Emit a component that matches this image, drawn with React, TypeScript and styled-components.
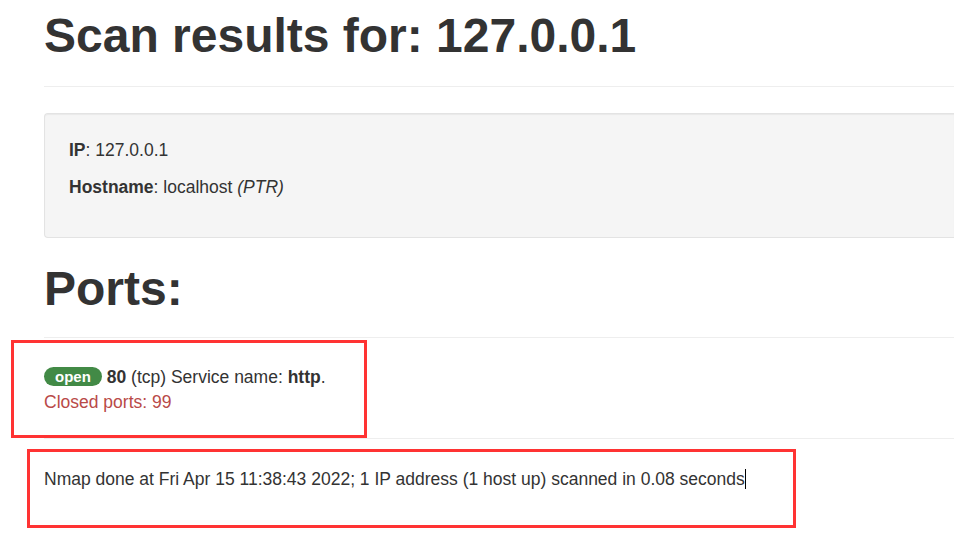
import React from "react";
import styled, { createGlobalStyle } from "styled-components";

const Global = createGlobalStyle`
  html, body {
    margin: 0;
    padding: 0;
    background: #fff;
    overflow: hidden;
  }
  body {
    font-family: "Liberation Sans", Arial, Helvetica, sans-serif;
    font-size: 17.5px;
    line-height: 25px;
    color: #333;
  }
`;

const Page = styled.div`
  position: relative;
  width: 100%;
  padding-left: 44px;
  box-sizing: border-box;
`;

const PageHeader = styled.div`
  padding-top: 10px;
  padding-bottom: 23px;
  border-bottom: 1px solid #eee;
  margin-bottom: 26px;
`;

const Title = styled.h1`
  margin: 0;
  font-size: 48px;
  line-height: 1.1;
  font-weight: bold;
  color: #333;
  white-space: nowrap;
`;

const Well = styled.div`
  background: #f5f5f5;
  border: 1px solid #e3e3e3;
  border-right: none;
  border-radius: 4px 0 0 4px;
  padding: 24px 24px 24px;
  margin-bottom: 25px;
  box-shadow: inset 0 1px 1px rgba(0, 0, 0, 0.05);
`;

const Para = styled.p`
  margin: 0 0 12.5px;
`;

const SectionTitle = styled(Title)`
  margin-bottom: 21px;
`;

const Row = styled.div<{ $top: number; $bottom: number }>`
  border-top: 1px solid #eee;
  padding-top: ${(p) => p.$top}px;
  padding-bottom: ${(p) => p.$bottom}px;
  white-space: nowrap;
`;

const Badge = styled.span`
  display: inline-block;
  background: #428a46;
  color: #fff;
  font-weight: bold;
  font-size: 15px;
  line-height: 19px;
  padding: 0 11px;
  border-radius: 10px;
  vertical-align: 1px;
`;

const Danger = styled.div`
  color: #b94a48;
`;

const Caret = styled.span`
  display: inline-block;
  width: 1px;
  height: 20px;
  background: #000;
  vertical-align: -4px;
`;

const Highlight = styled.div<{ $l: number; $t: number; $w: number; $h: number }>`
  position: absolute;
  left: ${(p) => p.$l}px;
  top: ${(p) => p.$t}px;
  width: ${(p) => p.$w}px;
  height: ${(p) => p.$h}px;
  border: 3px solid #f33;
  box-sizing: border-box;
  pointer-events: none;
`;

export default function App() {
  return (
    <>
      <Global />
      <Page>
        <PageHeader>
          <Title>Scan results for: 127.0.0.1</Title>
        </PageHeader>
        <Well>
          <Para>
            <b>IP</b>: 127.0.0.1
          </Para>
          <Para>
            <b>Hostname</b>: localhost <i>(PTR)</i>
          </Para>
        </Well>
        <SectionTitle>Ports:</SectionTitle>
        <Row $top={27} $bottom={23}>
          <div>
            <Badge>open</Badge> <b>80</b> (tcp) Service name: <b>http</b>.
          </div>
          <Danger>Closed ports: 99</Danger>
        </Row>
        <Row $top={28} $bottom={40}>
          Nmap done at Fri Apr 15 11:38:43 2022; 1 IP address (1 host up) scanned in 0.08 seconds
          <Caret />
        </Row>
        <Highlight $l={11} $t={340} $w={356} $h={98} />
        <Highlight $l={27} $t={449} $w={769} $h={79} />
      </Page>
    </>
  );
}
